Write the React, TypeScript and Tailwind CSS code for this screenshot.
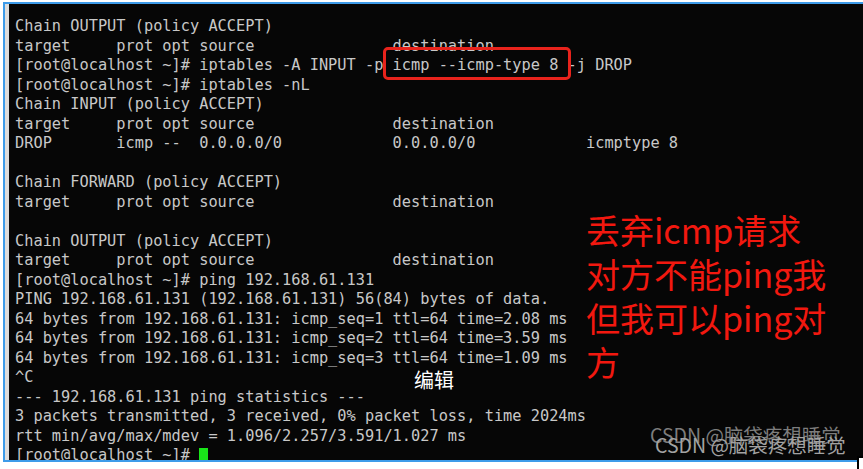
const lines: string[] = [
  'Chain OUTPUT (policy ACCEPT)',
  'target     prot opt source               destination',
  '[root@localhost ~]# iptables -A INPUT -p icmp --icmp-type 8 -j DROP',
  '[root@localhost ~]# iptables -nL',
  'Chain INPUT (policy ACCEPT)',
  'target     prot opt source               destination',
  'DROP       icmp --  0.0.0.0/0            0.0.0.0/0            icmptype 8',
  '',
  'Chain FORWARD (policy ACCEPT)',
  'target     prot opt source               destination',
  '',
  'Chain OUTPUT (policy ACCEPT)',
  'target     prot opt source               destination',
  '[root@localhost ~]# ping 192.168.61.131',
  'PING 192.168.61.131 (192.168.61.131) 56(84) bytes of data.',
  '64 bytes from 192.168.61.131: icmp_seq=1 ttl=64 time=2.08 ms',
  '64 bytes from 192.168.61.131: icmp_seq=2 ttl=64 time=3.59 ms',
  '64 bytes from 192.168.61.131: icmp_seq=3 ttl=64 time=1.09 ms',
  '^C',
  '--- 192.168.61.131 ping statistics ---',
  '3 packets transmitted, 3 received, 0% packet loss, time 2024ms',
  'rtt min/avg/max/mdev = 1.096/2.257/3.591/1.027 ms',
];

const note = ['丢弃icmp请求', '对方不能ping我', '但我可以ping对', '方'];

export default function App() {
  return (
    <div className="relative w-[863px] h-[469px] bg-white pl-[3px] pt-[2px] overflow-hidden">
      <div className="flex h-[460px] border-l-2 border-t-2 border-b-2 border-[#3d9be9]">
        <div className="w-[4px] bg-[#dcdcdc]" />
        <div className="flex-1 bg-[#060606] pl-[6px] pt-[13px] overflow-hidden">
          <pre className="font-['DejaVu_Sans_Mono',monospace] text-[15.3px] leading-[19.5px] text-[#c8c8c8]">
            {lines.map((l, i) => (
              <div key={i} className="h-[19.5px]">{l}</div>
            ))}
            <div className="h-[19.5px] flex items-center">
              <span>{'[root@localhost ~]# '}</span>
              <span className="inline-block w-[9px] h-[15px] bg-[#19e619]" />
            </div>
          </pre>
        </div>
      </div>

      {/* highlight box */}
      <div className="absolute left-[383px] top-[47px] w-[188px] h-[33px] border-[3px] border-[#e8231c] rounded-[5px]" />

      {/* annotation */}
      <div className="absolute left-[586px] top-[208px] font-['Noto_Sans_CJK_SC',sans-serif] text-[34px] leading-[44px] text-[#f2180f]">
        {note.map((t, i) => (
          <div key={i}>{t}</div>
        ))}
      </div>

      <div className="absolute left-[414px] top-[368px] font-['Noto_Sans_CJK_SC',sans-serif] text-[20px] leading-[24px] text-white">
        编辑
      </div>

      {/* watermark */}
      <div className="absolute left-[650px] top-[423px] font-['Noto_Sans_CJK_SC',sans-serif] text-[19.5px] leading-[24px] text-[#7d7d7d] whitespace-nowrap">
        CSDN @脑袋疼想睡觉
      </div>
      <div className="absolute left-[655px] top-[433px] font-['Noto_Sans_CJK_SC',sans-serif] text-[19.5px] leading-[24px] text-[#a3a3a3] whitespace-nowrap">
        CSDN @脑袋疼想睡觉
      </div>

      <div className="absolute left-[857px] top-[456px] w-[10px] h-[20px] border-l-2 border-t-2 border-black bg-white" />
    </div>
  );
}
